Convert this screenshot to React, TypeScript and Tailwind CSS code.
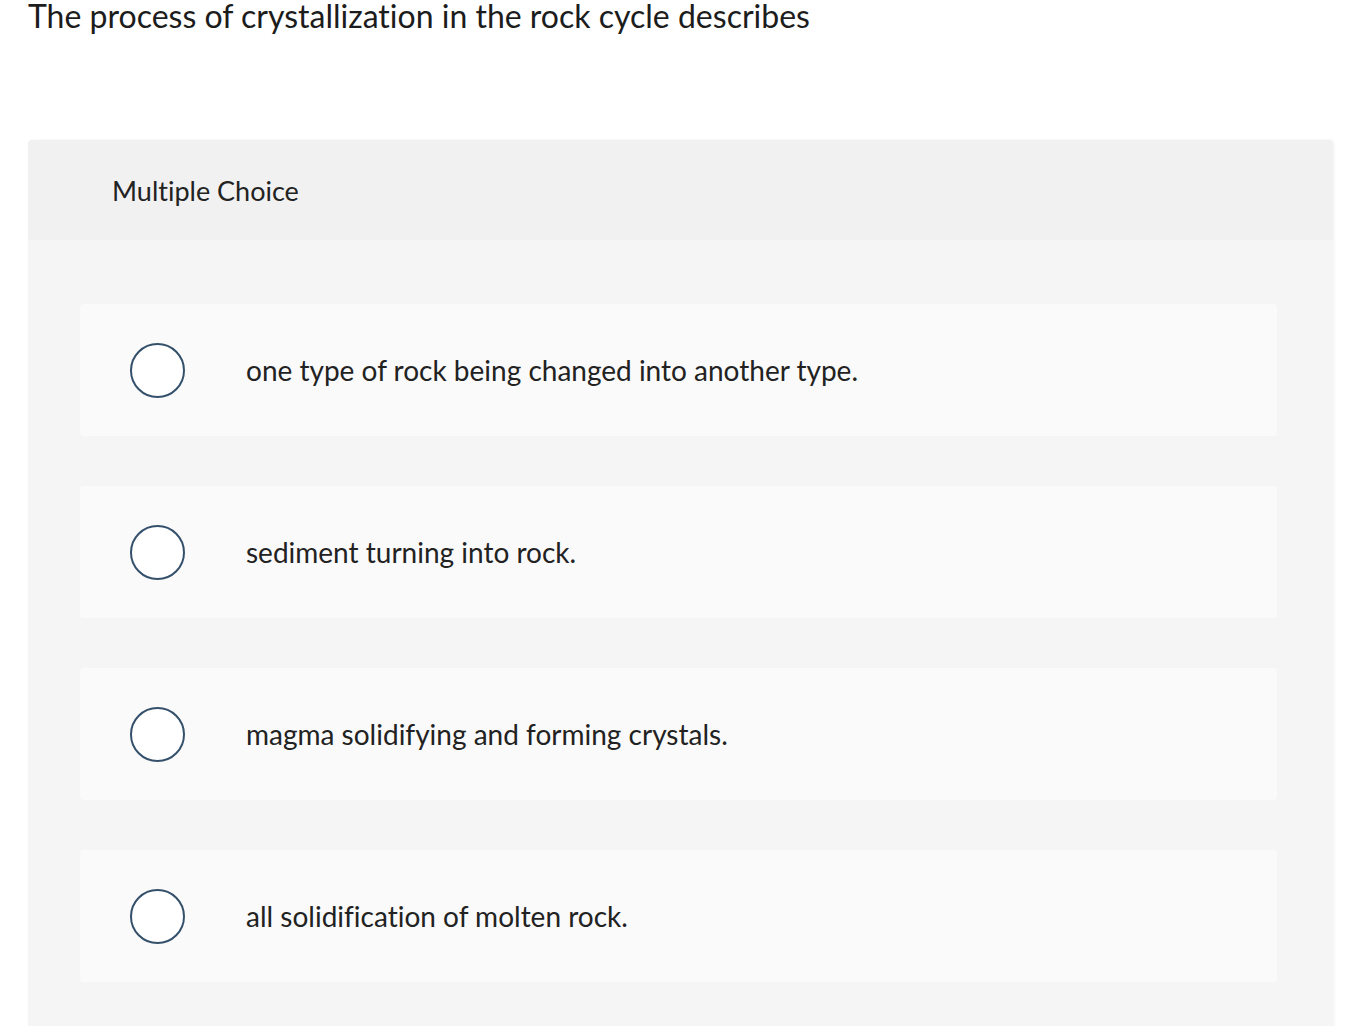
import React from "react";

const options = [
  "one type of rock being changed into another type.",
  "sediment turning into rock.",
  "magma solidifying and forming crystals.",
  "all solidification of molten rock.",
];

export default function App() {
  return (
    <div
      className="w-[1354px] h-[1026px] overflow-hidden bg-white text-[#222]"
      style={{ fontFamily: "Lato, 'Open Sans', sans-serif", fontVariantLigatures: "none" }}
    >
      <div className="pl-[28px] h-[140px]">
        <h1 className="text-[32px] leading-[32px] font-normal text-[#1c1c1c]">The process of crystallization in the rock cycle describes</h1>
      </div>
      <div className="ml-[28px] w-[1305px] rounded-t-[4px] shadow-[1px_0_3px_rgba(0,0,0,0.06)]">
        <div className="h-[100px] bg-[#f1f1f1] rounded-t-[4px] flex items-center pl-[84px]">
          <span className="text-[27px] text-[#222] pt-[3px]">Multiple Choice</span>
        </div>
        <div className="bg-[#f5f5f5] pt-[64px] pl-[52px] pr-[56px] pb-[60px] flex flex-col gap-[50px]">
          {options.map((o) => (
            <div key={o} className="h-[132px] bg-[#fafafa] rounded-[4px] flex items-center">
              <div className="ml-[50px] w-[55px] h-[55px] rounded-full border-2 border-[#34506b] bg-white shrink-0" />
              <span className="ml-[61px] text-[28px] text-[#222]">{o}</span>
            </div>
          ))}
        </div>
      </div>
    </div>
  );
}
